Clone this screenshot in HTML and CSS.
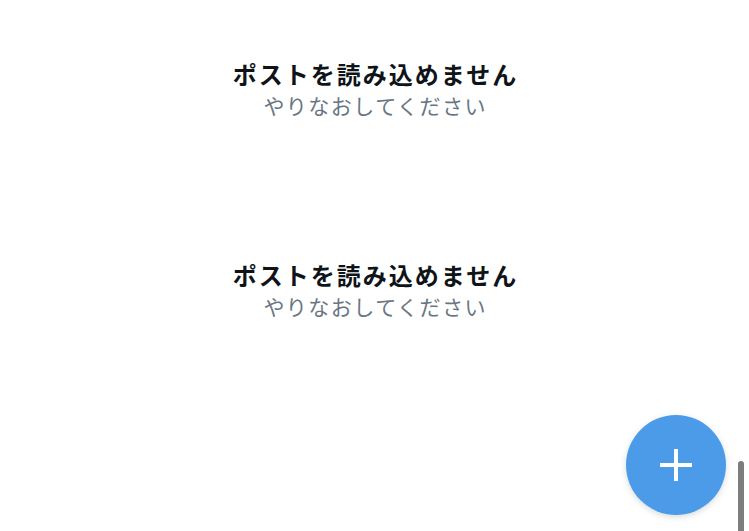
FILE: index.html
```html
<!DOCTYPE html>
<html lang="ja">
<head>
    <meta charset="UTF-8">
    <meta name="viewport" content="width=device-width, initial-scale=1.0">
    <title>ポスト</title>
    <link rel="stylesheet" href="styles.css">
</head>
<body>
    <div class="feed">
        <!-- 読み込みエラー -->
        <div class="error-block">
            <div class="error-title">ポストを読み込めません</div>
            <div class="error-sub">やりなおしてください</div>
        </div>

        <div class="error-block">
            <div class="error-title">ポストを読み込めません</div>
            <div class="error-sub">やりなおしてください</div>
        </div>
    </div>

    <button class="fab" aria-label="新規ポスト">
        <svg width="36" height="36" viewBox="0 0 36 36">
            <path d="M18 2 V34 M2 18 H34" stroke="#fff" stroke-width="4" fill="none"/>
        </svg>
    </button>

    <div class="scroll-thumb"></div>
</body>
</html>
```

FILE: styles.css
```css
body {
    margin: 0;
    background: #fff;
    font-family: "Noto Sans CJK JP", "Noto Sans", sans-serif;
    height: 531px;
    overflow: hidden;
}
.feed {
    display: flex;
    flex-direction: column;
}
.error-block {
    display: flex;
    flex-direction: column;
    align-items: center;
    padding: 58px 0 82px 0;
}
.error-title {
    font-size: 24px;
    font-weight: 700;
    line-height: 32px;
    letter-spacing: 2px;
    text-indent: 2px;
    color: #0f1419;
}
.error-sub {
    margin-top: 1px;
    font-size: 21px;
    line-height: 28px;
    letter-spacing: 1.5px;
    text-indent: 1.5px;
    color: #687684;
}
.fab {
    position: fixed;
    right: 23px;
    bottom: 16px;
    width: 100px;
    height: 100px;
    border-radius: 50%;
    border: 0;
    background: #4b9be9;
    box-shadow: 0 2px 6px rgba(0,0,0,0.15);
    display: flex;
    align-items: center;
    justify-content: center;
    padding: 0;
    cursor: pointer;
}
.scroll-thumb {
    position: fixed;
    right: 5px;
    top: 461px;
    width: 6px;
    height: 80px;
    border-radius: 3px;
    background: #7d7d7d;
}
```
